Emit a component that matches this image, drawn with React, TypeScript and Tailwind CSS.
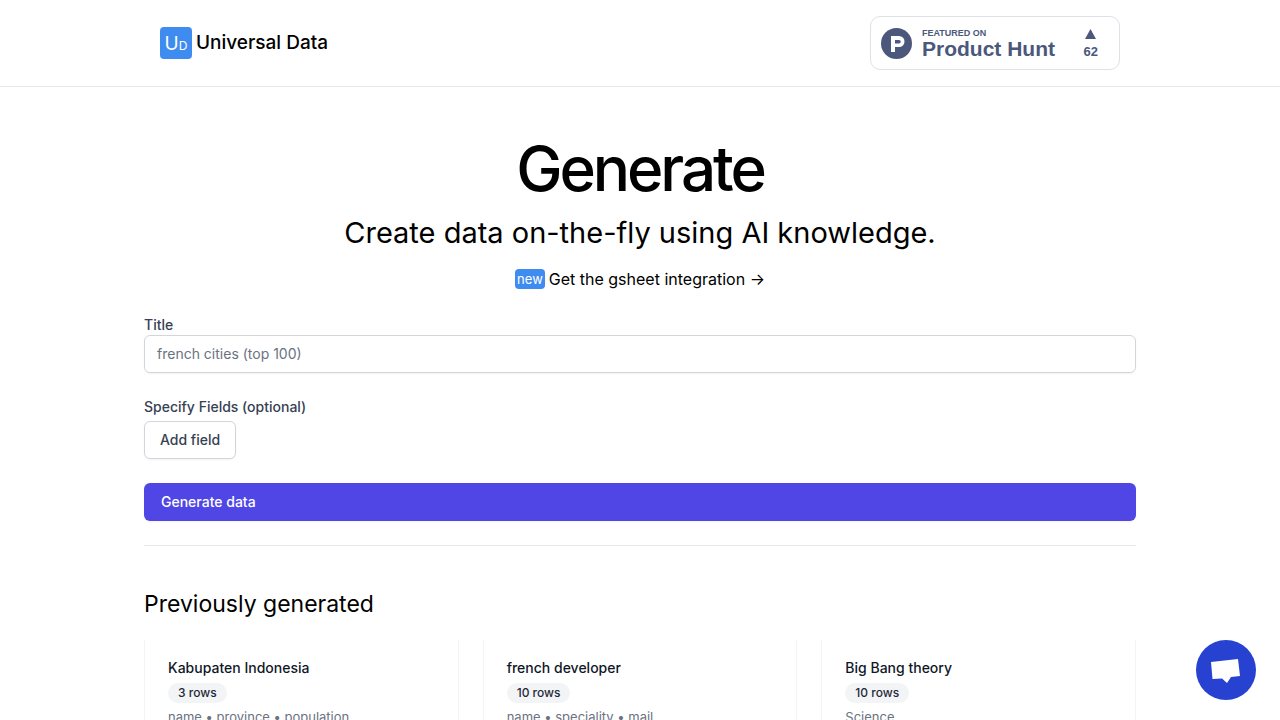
import React, { useState } from 'react';

const datasets = [
  { title: 'Kabupaten Indonesia', rows: 3, fields: 'name • province • population' },
  { title: 'french developer', rows: 10, fields: 'name • speciality • mail' },
  { title: 'Big Bang theory', rows: 10, fields: 'Science' },
];

const Header = () => (
  <header className="border-b border-[#e5e9ec]">
    <div className="mx-auto flex max-w-5xl items-center justify-between px-8 py-4">
      <a href="#" className="flex items-center gap-1 text-[19px] font-medium text-black">
        <span className="flex h-8 w-8 items-baseline justify-center rounded bg-[#3f8cf0] text-[19px] leading-[34px] font-normal text-white">
          U<span className="text-xs">D</span>
        </span>
        Universal Data
      </a>
      <a
        href="#"
        className="flex h-[54px] w-[250px] items-center rounded-[10px] border border-[#dfe1e8] bg-white pl-[10px] font-['Liberation_Sans'] font-bold text-[#4b587c]"
      >
        <svg width="31" height="31" viewBox="0 0 31 31" aria-hidden="true">
          <circle cx="15.5" cy="15.5" r="15.5" fill="#4b587c" />
          <path
            d="M10 8h8a5.5 5.5 0 0 1 0 11h-4v5h-4zM14 12v3.5h4a1.75 1.75 0 0 0 0-3.5z"
            fill="#fff"
            fillRule="evenodd"
          />
        </svg>
        <span className="ml-[10px] flex flex-col pt-[2px]">
          <span className="text-[9px] leading-[10px]">FEATURED ON</span>
          <span className="text-[21px] leading-[22px]">Product Hunt</span>
        </span>
        <span className="mr-[21px] ml-auto flex flex-col items-center gap-[6px] pt-[2px]">
          <svg width="11" height="10" viewBox="0 0 11 10" aria-hidden="true">
            <path d="M5.5 0L11 10H0z" fill="#4b587c" />
          </svg>
          <span className="text-[13px] leading-[14px]">62</span>
        </span>
      </a>
    </div>
  </header>
);

const App = () => {
  const [title, setTitle] = useState('');
  const [fields, setFields] = useState<string[]>([]);

  const updateField = (index: number, value: string) => {
    setFields(fields.map((field, i) => (i === index ? value : field)));
  };

  return (
    <div className="h-screen overflow-x-hidden overflow-y-auto bg-white font-[Inter,sans-serif] text-black [scrollbar-width:none]">
      <Header />

      <main className="mx-auto max-w-5xl px-4 pt-12">
        <div className="text-center">
          <h1 className="text-[62px] leading-[68px] font-medium tracking-tighter">Generate</h1>
          <p className="mt-3 text-[29px] leading-9">Create data on-the-fly using AI knowledge.</p>
          <a href="#" className="mt-4 inline-flex items-center gap-1 text-base leading-6">
            <span className="rounded-sm bg-[#3f8cf0] px-[2px] text-[13px] leading-5 text-white">new</span>
            Get the gsheet integration →
          </a>
        </div>

        <form className="mt-6" onSubmit={(e) => e.preventDefault()}>
          <label htmlFor="title" className="block text-sm font-medium text-gray-700">
            Title
          </label>
          <input
            id="title"
            type="text"
            value={title}
            onChange={(e) => setTitle(e.target.value)}
            placeholder="french cities (top 100)"
            className="block w-full rounded-md border border-gray-300 px-3 py-2 text-sm shadow-xs placeholder:text-gray-500"
          />

          {/* Optional fields */}
          <fieldset className="mt-6">
            <legend className="text-sm font-medium text-gray-700">Specify Fields (optional)</legend>
            {fields.map((field, i) => (
              <input
                key={i}
                type="text"
                aria-label={`Field ${i + 1}`}
                value={field}
                onChange={(e) => updateField(i, e.target.value)}
                className="mt-1 block w-full rounded-md border border-gray-300 px-3 py-2 text-sm shadow-xs"
              />
            ))}
            <button
              type="button"
              onClick={() => setFields([...fields, ''])}
              className="mt-1 block rounded-md border border-gray-300 bg-white px-[15px] py-2 text-sm font-medium text-gray-700 shadow-xs"
            >
              Add field
            </button>
          </fieldset>

          <button
            type="submit"
            className="mt-6 block w-full rounded-md border border-transparent bg-[#4f46e5] px-4 py-2 text-left text-sm font-medium text-white shadow-xs"
          >
            Generate data
          </button>
        </form>

        <hr className="my-6 border-gray-200" />

        <h2 className="pt-[18px] text-[23px] leading-8">Previously generated</h2>
        <ul className="mt-5 grid grid-cols-3 gap-6">
          {datasets.map((dataset) => (
            <li key={dataset.title} className="border-x border-gray-100 px-[23px] py-[18px] text-sm">
              <h3 className="font-medium text-gray-900">{dataset.title}</h3>
              <span className="mt-[5px] block w-fit rounded-full bg-gray-100 px-[10px] py-[2px] text-xs font-medium text-gray-800">
                {dataset.rows} rows
              </span>
              <p className="mt-1 text-[13px] leading-5 text-gray-500">{dataset.fields}</p>
            </li>
          ))}
        </ul>
      </main>

      {/* Chat launcher */}
      <button
        type="button"
        aria-label="Open chat"
        className="fixed right-6 bottom-5 h-[60px] w-[60px] rounded-full bg-[#2742d0]"
      >
        <svg width="60" height="60" viewBox="0 0 60 60" aria-hidden="true">
          <path d="M15 22L42 19L44 36L35 37L31 43L26 38.5L16.500 39z" fill="#fff" />
        </svg>
      </button>
    </div>
  );
};

export default App;
